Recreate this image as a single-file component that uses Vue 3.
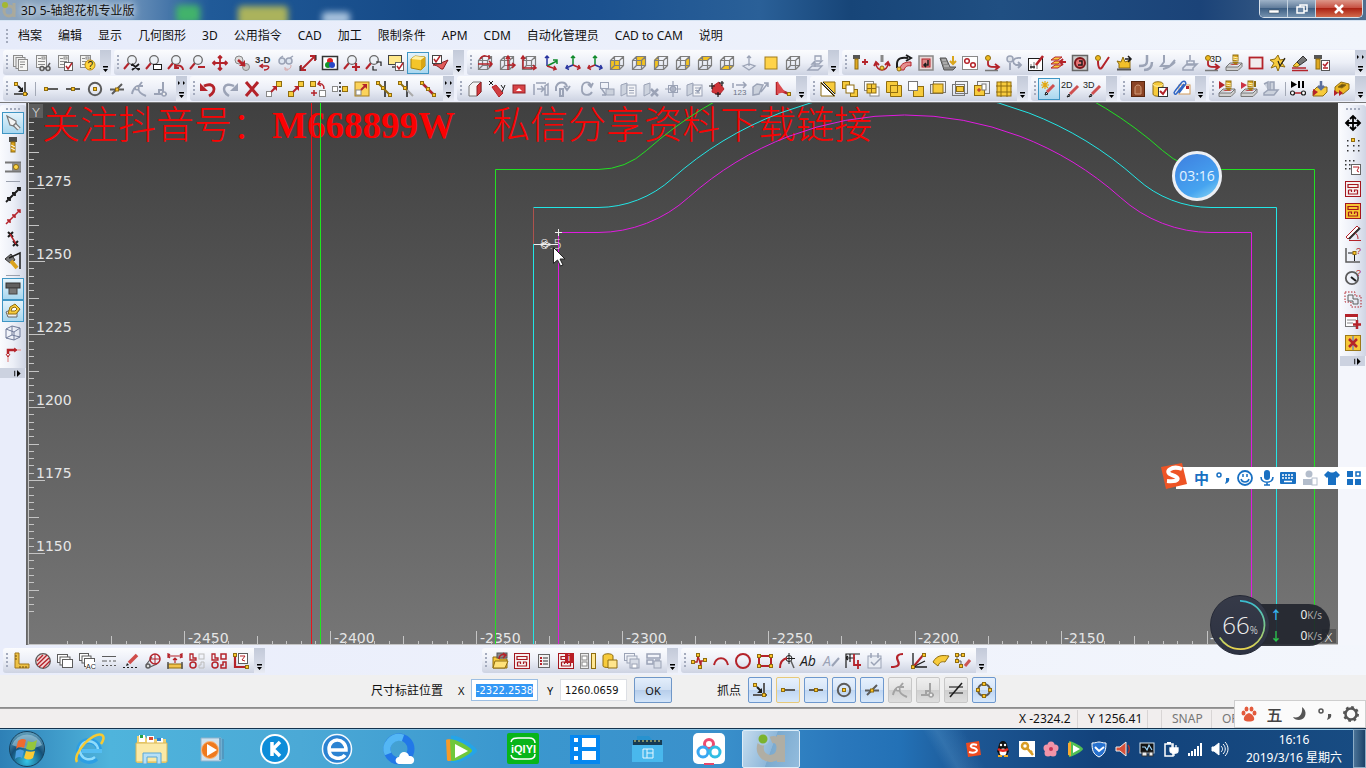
<script setup>
import { onMounted, ref } from 'vue'

const R = '#b4232a'
const Y = '#f7cb3c'
const K = '#1c1c1c'
const D = '#5c5c5c'
const S = '#9ba3b6'
const O = '#8f6d10'

const P = (d, s = K, w = 1.5, f = 'none') => `<path d="${d}" stroke="${s}" stroke-width="${w}" fill="${f}"/>`
const B = (x, y, w, h, f = 'none', s = 'none', sw = 1) => `<rect x="${x}" y="${y}" width="${w}" height="${h}" fill="${f}" stroke="${s}" stroke-width="${sw}"/>`
const C = (x, y, r, f = 'none', s = 'none', sw = 1.5) => `<circle cx="${x}" cy="${y}" r="${r}" fill="${f}" stroke="${s}" stroke-width="${sw}"/>`
const T = (x, y, t, size = 7, f = K) => `<text x="${x}" y="${y}" font-size="${size}" fill="${f}" font-family="Liberation Sans, sans-serif">${t}</text>`
const A = (x, t, f) => `<text x="${x}" y="13" font-size="14" font-style="italic" fill="${f}" font-family="Open Sans, sans-serif">${t}</text>`
const dot = (x, y) => B(x - 1.5, y - 1.5, 3, 3, '#ffc629', O)

const sheet = B(1.5, 0.5, 10, 12, '#f4f4f2', '#8b8b8b') + P('M3 3.5h3M3 6.500h7M3 9.500h7', '#8b8b8b', 1) + B(7, 2, 3, 2, 'none', '#8b8b8b')
const mag = P('M5 8L0 14', R, 2) + C(8, 5, 4.3, '#edf1f6', '#6a6a6a', 1.3)
const cube = (f) => f + P('M1.5 5.5h9v9h-9zM5.5 1.5h9v9h-9zM1.5 5.5l4-4M10.5 5.5l4-4M1.5 14.5l4-4M10.5 14.5l4-4', '#7d7d7d', 1.2)
const face = (d) => cube(P(d, 'none', 0, '#f3c31f'))
const wire = cube('')
const pen = (c = R) => P('M6 11L13 4', c, 3) + P('M4 14l1-3 2 2z', K, 1)
const tool = B(7, 0, 5, 6, '#dfa91d', O) + P('M7 2l5 1M7 4l5 1', '#fff2b0', 1) + P('M6 7h7l-3.500 3z', 'none', 0, '#a67c12')
const plate = P('M0 12l4-4h12l-4 4zM0 12v3.500h12l4-4V8', '#777', 1, '#cfcfcf') + P('M4 10l2-1h7l-2 1z', 'none', 0, '#c0474a')
const ball = C(4, 3, 2.5, '#eeb91d', O, 1)
const axes = (a, b, c) => P('M8 10V1M6 3l2-2 2 2', a, 1.5) + P('M8 10l7 3M12 14.500l3-1.500-1.500-3', b, 1.5) + P('M8 10l-7 3M4 14.500L1 13l1.500-3', c, 1.5)
const maze = (f, s) => B(0.5, 0.5, 15, 15, f, s, 1) + P('M3 3.500h10v3H3zM3.500 9v4h9V9M3.500 9h3v2M9.500 11V9h3', s, 1.200)
const page = B(6, 4, 9, 11, '#f3f4f7', S) + P('M8 7h5M8 9.500h5M8 12h5', S, 1)

const art = {
  copies: B(0.5, 0.5, 9, 11, '#eee', '#8b8b8b') + B(3, 2.500, 9, 11, '#eee', '#8b8b8b') + B(5.500, 4.500, 9, 11, '#f7f7f5', '#8b8b8b') + P('M7 7h5M7 9.500h5M7 12h3', '#8b8b8b', 1),
  sheetFind: sheet + C(7, 13.500, 2, '#ddd', D) + C(13, 13.500, 2, '#ddd', D) + P('M9 13h2M13 11l2-3', D),
  sheetCheck: sheet + B(7.500, 7.500, 8, 8, '#fff', '#666') + P('M9 11l2 3 4-6', R),
  sheetHelp: sheet + C(11, 10, 5, '#ffd63c', '#b98a12', 1) + T(8.500, 13.500, '?', 10),
  zoomAll: mag + P('M8 9l7 6M15 9l-7 6M8 9v2M15 15v-2', K, 1.8),
  zoomWin: mag + B(7.500, 9.500, 8, 5, '#fff', K),
  zoomBack: mag + P('M15 15c0-4-5-6-8-3M7 9v4h4', R, 1.8),
  zoomOut: mag + P('M8 12h7', R, 2),
  pan: P('M8 1v14M1 8h14M6 3l2-2 2 2M6 13l2 2 2-2M3 6L1 8l2 2M13 6l2 2-2 2', R, 1.8),
  spin: C(5, 5, 4, '#ddd', '#888', 1) + C(12, 12, 3.500, '#ccc', '#888', 1) + P('M4 5l7 6', R, 2.500) + P('M11 5v6H5z', 'none', 0, R),
  three: `<text x="-1" y="8" font-size="9.500" font-weight="700" font-family="Liberation Sans, sans-serif" fill="#333">3-D</text>` + P('M4 11h7c3 0 2 4-3 4M7 9l-3 2 3 2', R),
  glasses: C(4, 6, 3, '#dde5f0', S) + C(11, 6, 3, '#dde5f0', S) + P('M7 6h1M2 3l3-2M12 3l3-2', S) + P('M13 10c0 5-4 5-6 3M10 15H7v-3', '#d7a7a7', 1),
  measure: P('M1 15L15 1M10 1h5v5M1 10v5h5', R, 1.8) + P('M0 11v5M16 0v5', K, 1),
  colors: B(0.500, 1.500, 15, 13, '#fff', '#333', 1.500) + C(8, 6, 3, '#d22') + C(6, 10, 3, '#179429') + C(10, 10, 3, '#2947c7'),
  zoomIn: mag + P('M12 8v8M8 12h8', R, 2.200),
  zoomSel: mag + P('M10 7h5v4M7 11v4h4', K, 1.200),
  screenCheck: B(0.500, 0.500, 13, 9, '#ffe88a', '#444') + P('M4 12h5', '#444') + B(7.500, 7.500, 8, 8, '#fff', '#666') + P('M9 11l2 3 4-6', R),
  solid: P('M1 4l4-3 10 1v9l-4 4-10-2z', '#a88312', 1, '#f4c52a') + P('M1 4l10 1 4-3-10-1z', 'none', 0, '#fff1a6') + P('M11 5v10l4-4V2z', 'none', 0, '#d9a514'),
  surfCheck: P('M1 10c3-2 6 0 8-2l7-3-5 9c-3 1-4-4-10-4z', '#8b1c20', 1, '#e05a5a') + B(0.500, 0.500, 9, 8, '#fff', '#444') + P('M2 4l2 3 4-6', R),
  cubeA: wire + P('M3 4c3-5 8-3 10-1M12 0v4M1 9h14M12 6l3 3-3 3', R),
  cubeB: wire + P('M9 15V1M7 4l2-3 2 3M9 10h7M13 8l3 2-3 3', R),
  cubeC: wire + P('M2 1v12h13M0 4l2-3 2 3M12 10l3 3-3 2', R),
  ax1: P('M4 11V1M2 3l2-2 2 2', '#27339e', 1.5) + P('M4 11l10-5M10 5h4v4', '#118a2c', 1.5) + P('M4 11l9 3M11 11l2 3-3 1', R),
  ax2: axes('#118a2c', R, '#27339e'),
  ax3: axes('#118a2c', '#27339e', R),
  f1: face('M1 5h10v10H1z'), f2: face('M5 1h10v10H5z'), f3: face('M1 5l4-4v10l-4 4z'), f4: face('M10 5l5-4v10l-5 4z'), f5: face('M1 5l4-4h10l-4 4z'), f6: face('M1 15l4-4h10l-4 4z'),
  planeAx: P('M8 11V1M6 3l2-2 2 2M2 11l6-2 6 2-6 4z', S, 1.3),
  square: B(2, 2, 12, 12, '#ffd34a', '#a17c1b'),
  wire,
  layersUp: P('M1 15l4-4h10l-4 4zM8 12V7M5 9l3-3h7l-3 3zM8 5V1h6v4', S, 1.3),
  toolPlus: B(1, 0, 7, 4, '#555') + B(3, 4, 3, 10, '#e0aa22', O) + P('M10 7h6M13 4v6', R, 1.8),
  hook: P('M8 0v7', '#888', 3) + P('M2 8c0 9 12 9 12 0M0 11l2-4 3 3M11 10l3-3 2 4', R, 1.8) + C(8, 13, 2, Y, O, 1),
  bend: P('M1 13V9c0-6 5-7 11-6M10 0l5 3-5 3', K, 2) + P('M4 15c0-6 4-8 11-8v4c-4-1-6 1-7 4z', R, 1, '#e58f8f') + C(3, 14, 2, Y, O, 1),
  pocket: B(1, 1, 14, 14, '#e8d5d5', '#888', 1.500) + B(4, 4, 8, 8, '#d98585', R) + P('M10 5v5H6M8 8l-2 2 2 2', K),
  ramp: P('M0 3h6l4 9h6l-3 3H4z', '#555', 1, '#8a8a8a') + P('M2 5h4M3 8h4M4 11h5', '#ccc', 1) + P('M13 1v7M10 6l3 3 3-3', '#d9a51c', 2),
  holes: B(0.500, 1.500, 15, 13, '#fff', '#888') + C(5, 6, 2.300, 'none', R) + C(11, 10, 2.300, 'none', R),
  leadIn: ball + P('M4 6v3c0 3 3 3 10 3M11 9l4 3-4 3', R, 1.8) + P('M1 15.500h13', '#777'),
  leadTurn: C(4, 4, 3, '#dfe3ea', S) + P('M15 3c-8-1-10 4-5 7h5M12 7l3 3-3 3M4 8v7', S, 1.800),
  chart: B(0.500, 3.500, 14, 12, '#fff', K) + P('M3 14V9M6 14V7M9 14v-4', '#777', 1) + P('M8 10L15 1', R, 2.500) + P('M2 12h5', K),
  stack: P('M1 5l4-3h7l-4 3zM1 9l4-3h7l-4 3zM1 13l4-3h7l-4 3z', R, 1, Y) + P('M16 7h-5M13 4l-3 3 3 3', R, 1.800),
  face: B(0.500, 0.500, 15, 15, '#ccc', '#666', 1.500) + C(8, 8, 5, '#e57474', '#7e171a', 2) + P('M7 6h3v4H6', K),
  path: ball + P('M4 6c0 9 3 9 5 5l6-9', R, 2),
  gearBox: P('M3 13V9L1 6l4 1 2-5 2 5 5-2v8z', O, 1, '#f1c02a') + P('M1 14.500h14', '#555', 2) + P('M9 4h5M12 1l3 3-3 3', K),
  g1: P('M9 0v6c0 4-2 5-8 5M6 15c5 0 8-2 8-8', S, 2.500), g2: P('M4 0v7l-3 4h9l5-6M3 14c5-1 8-3 12-7', S, 2), g3: P('M8 0v6H5v4h7V6H9M1 13l4-4h10l-4 4v2H1z', S, 1.6),
  lead3d: ball + P('M4 6v3c0 3 3 3 10 3M11 9l4 3-4 3', R, 1.8) + T(6, 7, '3D', 9) + P('M1 15.500h13', '#777'),
  mill: plate + tool, redRect: B(1.500, 2.500, 13, 11, '#f1eded', R, 1.800),
  star: P('M8 0l2 5 5-1-3 4 3 4-5-1-2 5-2-5-5 2 3-5-4-3 5-1z', O, 1, Y) + P('M8 6l2 5 5-8', K, 1.200),
  brush: P('M0 13h14M0 15.500h16', R) + P('M1 11l4-4 3 3-3 2z', O, 1, Y) + P('M5 7l6-6 4 4-7 5z', '#333', 1, '#777'),
  toolList: B(0, 0, 8, 4, '#555') + B(2, 4, 4, 10, '#e0aa22', O) + B(7.500, 5.500, 8, 10, '#fff', '#555') + P('M9 9l2 2 3-4M9 13h5', R),
  snap: P('M12 1v12M1 13h14', D, 2) + P('M5 5l4 4', K, 2) + P('M10 6v5H5z', 'none', 0, K) + dot(3, 3) + dot(12, 13),
  snapEnd: P('M2 8h13', D, 2) + dot(3, 8), snapMid: P('M1 8h14', D, 2) + dot(8, 8), snapCtr: C(8, 8, 6.200, 'none', D, 2) + dot(8, 8),
  snapInt: P('M1 8.500h14M3 13L13 3', D, 2) + dot(8, 8.500),
  snapTan: P('M1 13c1-5 3-7 6-8h5M7 6c0 5 3 7 8 9M7 6L11 1', S, 2) + C(6, 7, 1.800, '#eee', S),
  snapPerp: P('M10 1v12M1 13h13M6 12V9h3', S, 2) + C(11, 13, 2, '#eee', S),
  snapPar: P('M1 5h14M1 11h14', '#777', 2) + P('M2 15L14 1', K), snapQuad: C(8, 8, 6, 'none', D, 2) + dot(8, 2) + dot(8, 14) + dot(2, 8) + dot(14, 8),
  undo: P('M4 5c10-5 14 5 5 10', R, 3) + P('M0 2v8h8z', 'none', 0, R), redo: P('M12 5C2 0-2 10 7 15', S, 2.500) + P('M16 2v8H8z', 'none', 0, S),
  del: P('M2 1l12 14M14 1L2 15', R, 3),
  move1: B(0.500, 10.500, 5, 5, '#fff', '#888') + B(10.500, 0.500, 5, 5, Y, O) + P('M5 11l4-4', R, 2) + P('M6 5h5v5z', 'none', 0, R), move2: B(0.500, 10.500, 5, 5, Y, O) + B(10.500, 0.500, 5, 5, Y, O) + P('M5 11l4-4', R, 2) + P('M6 5h5v5z', 'none', 0, R),
  rotate: B(0.500, 0.500, 5, 5, Y, O) + B(9.500, 9.500, 6, 6, '#fff', '#888') + P('M14 8c0-5-3-6-6-5M10 0L8 3l3 2M1 12h6M4 9v6', R),
  mirror: B(0.500, 5.500, 5, 5, '#fff', '#888') + B(10.500, 5.500, 5, 5, Y, O) + P('M8 1v2M8 5v2M8 9v2M8 13v2', K),
  scale: B(1, 1, 14, 14, '#fbd35b', '#a97f19') + B(2, 9, 5, 5, '#fff', '#888') + P('M7 9l4-4', R, 2) + P('M8 3h5v5z', 'none', 0, R),
  trim1: P('M9 0v16', K) + P('M1 1l14 14', O, 2) + dot(2, 2) + dot(7, 7) + dot(14, 14), trim2: P('M9 0v16', K) + P('M9 9l6 6', '#aaa', 2) + P('M1 1l8 8', O, 2) + dot(2, 2) + dot(7, 7), trim3: P('M1 1l14 14', R, 2.500) + dot(2, 2) + dot(8, 8) + dot(14, 14),
  box: P('M2 5l4-4h8v10l-4 4H2z', '#777', 1, '#f3f3f3') + P('M10 5l4-4v10l-4 4z', '#8d2024', 1, '#d5393d'),
  boxRot: P('M3 6l4-2 7 8-4 4z', R, 1, '#d13d40') + P('M0 0l4 4M4 0L0 4M12 4l2 3M16 4l-3 7', K, 1), tag: B(2, 4, 12, 8, '#d74347', '#962025') + P('M5 10h6L8 7z', 'none', 0, '#fff'),
  s1: P('M1 3v11M4 8h6M8 5l3 3-3 3M12 5v9h3V3zM3 2h10', S, 1.500), s2: P('M1 10V6c2-6 10-6 11 0M9 5l3 4 3-4M5 8v7h3V8z', S, 2), s3: P('M15 11c-2 4-9 4-10-1V6c1-6 8-6 9-1M11 3l3 3 2-4', S, 1.800), s4: B(1.500, 1.500, 8, 6, 'none', S) + B(7, 8, 8, 6, '#cbd1dc', S) + P('M2 7l5 7M3 14h4', S), s5: P('M0 4l6-2v10l-6 3z', S, 1, '#cdd3de') + page,
  s6: P('M1 4l6-2v10l-6 3z', S, 1, '#cdd3de') + P('M8 8l7 7M15 8l-7 7', S, 2.500), s7: B(3.500, 4.500, 9, 7, 'none', S) + P('M8 0v16M0 8h16', S, 1.200) + C(8, 8, 2.500, 'none', S), s8: P('M0 4l6-2v10l-6 3z', S, 1, '#cdd3de') + page + P('M9 9l2 2 3-5', S, 1.500),
  pts: P('M4 5l6-4 5 7-5 6-7-3z', R, 1, '#cf3438') + P('M3 2v6M0 5h6M13 0v5M10 2h5M9 11v5M6 13h6', K, 1.200), s9: T(2, 14, '123', 8, '#6d7384') + P('M2 7V2M5 4h9M12 1l3 3-3 3', S), s10: P('M0 6l4-3 6 1-4 9-6 1zM8 11l7-9M11 2h4v4', S, 1.500, '#cbd1dc'), corner: P('M2 1v13M2 8l12 5', R, 2.500) + dot(14, 13) + P('M2 13V0l8 11z', 'none', 0, '#db4b4e'),
  tri: P('M1 1v14h14z', O, 1, '#fff') + P('M3 1h12v12z', O, 1, Y) + P('M1 2l13 13M3 1l12 12', K, 1),
  sq1: B(0.500, 0.500, 7, 7, Y, O) + B(8.500, 8.500, 7, 7, Y, O) + B(4, 4, 8, 8, '#fff', O), sq2: B(0.500, 0.500, 9, 9, '#fff', '#888') + B(6, 6, 9, 9, '#fff', '#888') + B(3, 3, 9, 9, Y, O) + P('M7.500 3v9M3 7.500h9', O, 1),
  sq3: P('M0.500 0.500h11v4h4v11h-11v-4h-4z', O, 1, Y) + B(4.500, 4.500, 7, 7, 'none', O), sq4: B(5.500, 5.500, 10, 10, Y, O) + B(0.500, 0.500, 9, 9, '#fff', '#777'), sq5: B(0.500, 3.500, 12, 9, '#e3e3e3', '#777') + B(3.500, 0.500, 12, 11, 'none', '#777') + B(3, 3, 10, 9, Y, O), sq6: B(0.500, 3.500, 12, 11, 'none', '#777') + B(3.500, 0.500, 12, 12, 'none', '#777') + B(4.500, 5.500, 7, 5, Y, O), sq7: B(3.500, 0.500, 12, 12, 'none', '#777') + B(0.500, 4.500, 10, 10, Y, O) + P('M3 9h4M5 7v4', R, 1) + B(8, 3, 4, 6, '#fff', '#777'), grid: B(1, 1, 14, 14, Y, O) + P('M5 0v16M11 0v16M0 5h16M0 11h16', O, 1),
  wand: pen('#cf5050') + P('M4 0v8M0 4h8M1 1l6 6M7 1L1 7', '#e2a812', 1.200), d2: T(-2, 7, '2D', 9) + P('M7 13L15 5', '#cf5050', 3) + P('M4 16l3-1-1-2z', K, 1), d3: T(-2, 7, '3D', 9) + P('M7 13L15 5', '#cf5050', 3) + P('M4 16l3-1-1-2z', K, 1),
  door: B(1.500, 0.500, 13, 15, '#8a4324', '#57260f') + P('M5 13V7c0-4 6-4 6 0v6z', '#d09a78', 1, '#a25a35'),
  dbCheck: P('M1 3c0-3 10-3 10 0v10c0 3-10 3-10 0z', O, 1, Y) + P('M1 3c0 3 10 3 10 0', '#fff3b0', 1) + B(6.500, 6.500, 9, 9, '#fff', '#333') + P('M8 10l3 3 4-6', R, 2), clip: B(5, 4, 11, 9, '#fff', '#d09a5a') + B(12, 5, 3, 3, R) + P('M10 3L3 12c-2 3-4 0-2-2L8 1c3-2 5 1 3 3l-6 8', '#3066c4', 1.500),
  run1: plate + tool + P('M0 0l6 4-6 4z', 'none', 0, R), run2: plate + tool + P('M0 1l6 3-6 4z', 'none', 0, '#c34') + P('M14 0v6', O, 2), run3: P('M1 3l4-2v8M7 1v8h4V1zM1 12l4-3h10l-4 5H1z', S, 1.500, '#cbd1dc'), playPause: P('M1 0l6 3.500L1 7z', 'none', 0, '#000') + P('M9 0v7M13 0v7', '#000', 2) + C(2.500, 12, 2, '#fff', K, 1.200) + C(13.500, 12, 2, '#fff', K, 1.200) + P('M5 12h6', R), box1: P('M1 10l4-4h10v5l-4 4H1z', O, 1, Y) + P('M9 0v7M6 5l3 3 3-3', '#5c6f9c', 2.500) + P('M1 8l5 3-5 4z', 'none', 0, R), box2: P('M1 6l6-5 8 2v5l-6 5-8-2z', O, 1, '#ecb724') + P('M4 6l4-3 4 1-4 3z', O, 1, '#6f5512') + P('M0 9l4 3-4 3zM5 9l4 3-4 3z', 'none', 0, R),
  arrow: P('M2 1l9 5v4l-2 1-4-1z', '#777', 1.200, '#f4f4f4') + P('M9 9l5 5', '#777', 4.500) + P('M10 10l4 4', '#eee', 2.200), cutter: B(4, 0, 8, 5, '#4d4d4d') + B(6, 5, 4, 10, '#dea41b', O) + P('M6 8l4 2M6 11l4 2', '#fff', 1), slot: P('M0 3.500h16M0 12.500h16', '#777', 2) + B(7, 4, 9, 8, '#8a8a8a') + C(11, 8, 2.500, '#ffd84a', O, 1), chainK: P('M1 15L15 1M5 14v-3H2M10 9V6H7M15 4V1h-3', K, 1.800), chainR: P('M1 15L15 1M5 14v-3H2M10 9V6H7M15 4V1h-3', R, 1.500), chainX: P('M3 1l5 5M8 1L3 6M8 10l5 5M13 10l-5 5', K, 2) + P('M5 3l6 10', R), cutCheck: P('M0 6l6-5 4 6-5 3z', '#333', 1, '#777') + P('M6 8l6 7', '#dba31d', 4) + P('M4 5L15 0v16', K),
  holder: B(1, 2, 14, 5, '#606060', '#333') + B(4, 7, 8, 6, '#777', '#444'), goldBlock: P('M1 9l6-3h8l-3 4v4H3z', '#666', 1, '#eee') + P('M3 11l2-7 5-3 5 5-4 5z', O, 1, Y) + P('M6 8l1-3 3-1 2 2-2 2z', O, 1, '#fff'), wireBox: P('M1 4l6-3 8 2v9l-6 3-8-2zM1 4l8 3 6-4M9 7v8M7 1v9l-6 3M7 10l8 2', '#707b99', 1), redCorner: P('M3 7V3h8', R, 2.500) + P('M3 8v7M12 3h4', '#e6a3a3', 1.500) + P('M1 7l2 3 2-3M9 1l3 2-3 2', R, 1),
  moveK: P('M8 1v14M1 8h14M5 4l3-3 3 3M5 12l3 3 3-3M4 5L1 8l3 3M12 5l3 3-3 3', '#000', 1.800), dots: [3, 8, 13].map(y => [2, 8, 13].map(x => B(x, y, 1.500, 1.500, '#333')).join('')).join('') + dot(8, 3), dotsList: [1, 5, 9].map(y => [0, 4, 8].map(x => B(x, y, 1.500, 1.500, '#333')).join('')).join('') + B(6.500, 5.500, 9, 10, '#fff', '#666') + P('M8 8h6l-2 4 2 1', R, 1),
  mazeR: maze('#f6eeee', '#a4171f'), mazeY: maze('#f7c433', '#a4171f'), ruler: P('M1 12L12 1l2 2L3 14z', R, 1, '#fff') + P('M4 14L15 3', '#333', 2) + P('M4 15.500h12M13 14c0-3-1-5-3-6', R, 1), axisQ: P('M1 1v14h14', D) + P('M3 6h5M9.500 8v6', K, 1) + dot(9.500, 6) + T(11, 7, '?', 9, R), circQ: C(7, 9, 6.200, 'none', D, 1.800) + P('M6 8l5 4', K, 2) + T(11, 7, '?', 9, R), dotShape: P('M0 1h10v4h6v11H6v-5H0z', R, 1).replace('/>', ' stroke-dasharray="1.500 1.500"/>') + P('M3 4h5v4h5v5H8v-3H3z', D, 1), listPlus: B(0.500, 1.500, 12, 12, '#fff', '#777') + B(0, 1, 13, 3, R) + P('M2 7h9M2 10h6', '#888', 1) + P('M12 7v9M8 11.500h8', R, 2.500), boxX: B(0.500, 0.500, 15, 15, '#f7c738', '#9c7a19') + P('M8 1v14', '#999', 2) + P('M4 4l8 8M12 4l-8 8', R, 2.500),
  rulerL: P('M2 0h4v11h10v4H2z', '#a17719', 1, '#eec245') + P('M2 3h2M2 6h2M7 15v-2M10 15v-2M13 15v-2', '#6e4c10', 1), hatch: C(8, 8, 7.300, '#f4d5d5', D, 1.300) + P('M2 8l6-6M2 12L12 2M4 14L14 5M8 15l7-7', R, 1.400), rects: B(0.500, 1.500, 10, 8, '#fff', D) + B(3, 4, 10, 8, '#fff', D) + B(5.500, 6.500, 10, 8, '#fff', D), rectsAc: B(0.500, 0.500, 9, 7, '#fff', D) + B(3, 3, 9, 7, '#fff', D) + B(5.500, 5.500, 10, 8, '#fff', D) + B(7, 9, 9, 7, '#fff') + T(7, 16, 'AC', 7), lines: P('M1 3.500h14', D, 1) + P('M1 8h5M8 8h2M12 8h3M1 12.500h2M5 12.500h2M9 12.500h2M13 12.500h2', D, 1), penLine: P('M0 14.500h2M4 14.500h2M8 14.500h2M12 14.500h2', K, 1) + P('M6 10l8-8', '#cf4c49', 3.500) + P('M3 13l3-1-2-2z', 'none', 0, K), bulb: P('M1 12l6-8M5 14l7-3', D, 1.200) + C(10, 6, 5, 'none', R) + P('M10 1v10M5 6h10', R, 1) + C(3, 13, 2, '#ddd', D),
  dim: P('M1 0v5M15 0v5M1 3h14M3 1L1 3l2 2M13 1l2 2-2 2M8 10V5M6 7l2-2 2 2', R, 1.200) + B(1, 11, 14, 4, '#f1c34b', O) + P('M1 9v7M15 9v7', '#555'), shapesA: P('M1 1v6h6V5H4V1z', R, 1.300) + C(4, 12, 3, 'none', R) + B(10, 1, 5, 5, 'none', '#bcbcbc') + P('M10 15h5V9h-3v3h-2z', '#bcbcbc', 1), shapesB: P('M1 1v6h6V5H4V1z', R, 1.300) + C(4, 12, 3, 'none', R) + B(10, 1, 5, 5, 'none', R, 1.500) + P('M10 15h5V9h-3v3h-2z', R), frame: P('M2 2v12h12', R, 2.200) + dot(2, 2) + dot(14, 14) + B(5.500, 0.500, 9, 10, '#fff', D) + P('M7 3h5l-3 4 3 1', R, 1),
  folder: P('M1 4h5l1 2h8v9H1z', O, 1, Y) + B(5, 0, 10, 5, '#8a8a8a', '#555') + P('M3 8h13l-3 7H1z', O, 1, '#ffe27a') + P('M7 6c0-4 3-5 6-4M11 0l3 2-3 3', R), listR: B(2.500, 1.500, 11, 13, '#f1f1f1', '#666') + P('M4 5h2M4 8h2M4 11h2', R, 2) + P('M7 5h5M7 8h5M7 11h5', '#333', 1), mazeI: maze('#f6eeee', '#a4171f') + B(7, 0, 9, 10, '#b81e25') + T(10, 8, 'i', 9, '#fff'), cols: B(0.500, 0.500, 8, 15, '#eee', '#888') + B(2, 3, 5, 4, '#fff', '#888') + B(2, 9, 5, 4, '#fff', '#888') + B(11.500, 0.500, 4, 15, '#ffe794', O), dbFile: P('M1 3c0-3 10-3 10 0v10c0 2-10 2-10 0z', O, 1, Y) + P('M6 7h9v8H6z', O, 1, '#ffe58c'), saveG: B(0.500, 0.500, 10, 7, 'none', S) + B(3, 3, 10, 7, '#eceff5', S) + B(6, 6, 9, 9, '#d8dde7', S) + B(8, 11, 5, 4, '#fff', S), mazeG: P('M1 1h13v4H1zM1 7h6v4H1zM9 7h5', S) + B(8, 8, 7, 7, '#d8dde7', S),
  poly: P('M1 9h5l1-6 3 10V8h4', R, 1.500) + dot(2, 9) + dot(7, 2) + dot(9, 14) + dot(14, 7), arc: P('M1 12C3 3 13 3 15 12', R, 2), circle: C(8, 8, 7, 'none', R, 2), rectP: B(2, 3, 12, 10, 'none', R, 2) + dot(2, 3) + dot(14, 3) + dot(2, 13) + dot(14, 13), arcT: C(10, 5.500, 3, 'none', K, 1) + P('M10 0v11M5 5.500h11', K, 1) + P('M1 15c0-7 3-9 7-10', R, 2) + P('M12 8l3 7', D), ab: A(-1, 'Ab', K), abG: A(0, 'A', S) + P('M9 13l7-8', S, 2), measureR: P('M1 15V1h14M5 1v8M1 5h9M3 3L1 5l2 2', K, 1.200) + P('M9 1v11h7M13 7v9', R, 1.800), calG: B(1, 3, 13, 12, '#e9edf4', S) + P('M4 0v5M11 0v5M4 9l3 3 7-7', S), ess: P('M14 1C8 1 7 4 9 8s0 6-7 6', R, 2.200), angle: P('M2 0v14h14M2 14l12-6', K, 1.300) + P('M3 13L13 1', R, 2) + dot(2, 14) + dot(13, 2), surf: P('M0 9c4-7 9-7 16-6l-4 6c-4-1-6 1-7 4z', O, 1, Y), polyPen: P('M2 2h6M2 2v6h4M6 8v5', D, 1) + dot(2, 2) + dot(8, 2) + dot(2, 8) + dot(6, 13) + P('M10 13l5-6', '#cc5552', 3)
}

const L = (s) => s.split(' ').map((n) => ({ name: n.replace('*', ''), on: n.endsWith('*'), sep: n === '|' }))
const row1 = [
  { icons: L('copies sheetFind sheetCheck sheetHelp') },
  { icons: L('zoomAll zoomWin zoomBack zoomOut pan spin three glasses measure colors zoomIn zoomSel screenCheck solid* surfCheck') },
  { icons: L('cubeA cubeB cubeC ax1 ax2 ax3 f1 f2 f3 f4 f5 f6 planeAx square wire layersUp') },
  { icons: L('toolPlus hook bend pocket ramp holes leadIn leadTurn chart stack face path gearBox g1 g2 g3 lead3d mill redRect star brush toolList'), more: true, grow: true }
]
const row2 = [
  { icons: L('snap | snapEnd snapMid snapCtr snapInt snapTan snapPerp'), more: true },
  { icons: L('undo redo del move1 move2 rotate mirror scale trim1 trim2 trim3'), more: true },
  { icons: L('box boxRot tag s1 s2 s3 s4 s5 s6 s7 s8 pts s9 s10 corner') },
  { icons: L('tri sq1 sq2 sq3 sq4 sq5 sq6 sq7 grid') },
  { icons: L('wand* d2 d3') },
  { icons: L('door dbCheck clip') },
  { icons: L('run1 run2 run3 | playPause box1 box2'), grow: true }
]
const bottomLeft = [{ icons: L('rulerL hatch rects rectsAc lines penLine bulb dim shapesA shapesB frame') }]
const bottomMid = [
  { icons: L('folder mazeR listR mazeI cols dbFile saveG mazeG') },
  { icons: L('poly arc circle rectP arcT ab abG measureR calG ess angle surf polyPen') }
]
const bars = [row1, row2]
const leftTools = L('arrow* cutter slot | chainK chainR chainX cutCheck | holder* goldBlock* wireBox redCorner')
const rightTools = L('moveK dots dotsList mazeR mazeY ruler axisQ circQ dotShape listPlus boxX')
const menus = ['档案', '编辑', '显示', '几何图形', '3D', '公用指令', 'CAD', '加工', '限制条件', 'APM', 'CDM', '自动化管理员', 'CAD to CAM', '说明']
const snaps = [
  { n: 'snap', c: 'on' }, { n: 'snapEnd', c: 'hot' }, { n: 'snapMid', c: 'on' }, { n: 'snapCtr', c: 'on' }, { n: 'snapInt', c: 'on' },
  { n: 'snapTan', c: 'off' }, { n: 'snapPerp', c: 'off' }, { n: 'snapPar', c: 'off' }, { n: 'snapQuad', c: 'on' }
]

const range = (a, b) => Array.from({ length: b - a + 1 }, (_, i) => a + i)
const yTicks = range(-11, 58).map((i) => ({ y: 188.5 + i * 7.3, w: i % 10 === 0 ? 16 : i % 5 === 0 ? 10 : 5 })).filter((t) => t.y > 118 && t.y < 615)
const xTicks = range(-8, 72).map((i) => ({ x: 184.5 + i * 14.61, h: i % 10 === 0 ? 13 : i % 5 === 0 ? 8 : 3 })).filter((t) => t.x > 60 && t.x < 1320)
const yLabels = [1275, 1250, 1225, 1200, 1175, 1150].map((v, i) => ({ v, y: 186 + i * 73 }))
const xLabels = [-2450, -2400, -2350, -2300, -2250, -2200, -2150, -2100].map((v, i) => ({ v, x: 188 + i * 146 }))

const apps = {
  ie: '<path d="M26 18A10 10 0 1 0 23 25" fill="none" stroke="#2d9fe4" stroke-width="6"/><path d="M25 17A9 9 0 1 0 22 24" fill="none" stroke="#8fdcfb" stroke-width="2.500"/><path d="M9 18h20" stroke="#54bdf2" stroke-width="4"/><path d="M4 29C-1 21 20-2 29 2c3 2 1 6-1 9" fill="none" stroke="#f6ca34" stroke-width="2.5"/>',
  folder: '<path d="M2 3h8l2 3h19v24H2z" fill="#efd173"/><path d="M4 2h6v7H4zM12 3h7v7h-7zM22 5h6v6h-6z" fill="#fff"/><path d="M5 2h3v3H5z" fill="#27a345"/><path d="M14 4h4v3h-4z" fill="#d84b30"/><path d="M22 5h4v3h-4z" fill="#3180d0"/><path d="M1 10h31v19H1z" fill="#fbe9a6" stroke="#d8b655"/><path d="M8 31V20h18v11h-4v-7H12v7z" fill="#b7e0f6" stroke="#5ba7d6"/>',
  media: '<path d="M4 5h20v23H4z" fill="#cfe2ef" stroke="#8fb2cb"/><path d="M23 5v22M26 6v20" stroke="#5391b8" stroke-width="1.500"/><circle cx="13" cy="17" r="8.500" fill="#ef7a1e" stroke="#f8b67c"/><path d="M10 11l10 6-10 6z" fill="#fff"/>',
  k: '<circle cx="16" cy="16" r="15" fill="#fff"/><circle cx="16" cy="16" r="13" fill="#0d8dd9"/><path d="M13 9v14M21 9l-7 7 7 7" stroke="#fff" stroke-width="3.500" fill="none"/>',
  e2: '<circle cx="16" cy="16" r="14.500" fill="#2b83d2" stroke="#f4faff" stroke-width="1.500"/><path d="M24 22c-3 5-16 5-16-6 0-12 17-12 17 1H9" fill="none" stroke="#fff" stroke-width="3.500"/>',
  q: '<circle cx="16" cy="16" r="12" fill="none" stroke="#2278e8" stroke-width="7"/><path d="M5 21A12 12 0 0 1 20 5" fill="none" stroke="#54b7f5" stroke-width="7"/><path d="M16 31c-5-1-4-7 0-7 1-7 9-6 10-1 6-1 7 7 2 8z" fill="#fff"/>',
  tv: '<path d="M6 3c4-3 27 11 26 15S10 33 6 29z" fill="#25a4e8"/><path d="M1 7c3-4 24 8 23 11S4 31 2 27z" fill="#f89a28"/><path d="M5 7c3-3 23 8 22 11S8 31 6 27z" fill="#6fc83b"/><path d="M10 11l13 7-13 7z" fill="#fff"/>',
  qiyi: '<rect width="32" height="31" rx="2" fill="#08b51a"/><path d="M4 9C5 5 8 5 11 5h11c4 0 6 1 6 5M4 22c1 4 4 4 7 4h11c4 0 6-1 6-5" fill="none" stroke="#fff" stroke-width="1.500"/><text x="4" y="20" font-family="Liberation Sans,sans-serif" font-weight="700" font-size="11" fill="#fff">iQIYI</text>',
  grid: '<rect x="1" y="2" width="30" height="29" fill="#0587f0"/><path d="M5 5h4v4H5zM5 14h4v4H5zM5 23h4v4H5zM13 5h14v9H13zM13 18h14v9H13z" fill="#fff"/>',
  film: '<path d="M6 3h12l3 4H6z" fill="#2792cf"/><path d="M2 7h29v8H2z" fill="#163b53"/><path d="M3 8h28" stroke="#e7e37d" stroke-dasharray="2 2"/><path d="M1 12h31v17H1z" fill="#49b8ed"/><path d="M12 16h10v9H12zM16 16v9M16 20h6" fill="none" stroke="#e8f8ff"/>',
  cloud: '<rect width="32" height="31" rx="5" fill="#fff"/><circle cx="16" cy="11" r="4.500" fill="none" stroke="#ed4c70" stroke-width="3"/><circle cx="10" cy="19" r="5" fill="none" stroke="#39a7f2" stroke-width="3"/><circle cx="22" cy="19" r="5" fill="none" stroke="#31bde3" stroke-width="3"/><path d="M11 31h10" stroke="#e5486a" stroke-width="2"/>',
  alpha: '<path d="M6 11c-3 9 4 16 12 14 5-1 7-6 7-11s-4-9-9-7" fill="none" stroke="#b0aea4" stroke-width="7"/><path d="M22 2h8v27h-8z" fill="#b0aea4"/><circle cx="8" cy="6" r="5.500" fill="#7bb32e" stroke="#a9c8de" stroke-width="2"/>'
}
const tray = [
  P('M1 2l13-2 2 14-13 2z', 'none', 0, '#ee4b20') + P('M12 4c-6-2-9 2-3 3 6 2 2 6-5 4', '#fff', 2),
  P('M8 0c-5 0-4 7-6 10l2 4h8l2-4c-2-3-1-10-6-10z', 'none', 0, '#111') + C(8, 11, 3.500, '#fff') + P('M3 8c3 2 7 2 10 0', '#e52c22', 2.500) + C(6, 4, 1.200, '#fff') + C(10, 4, 1.200, '#fff') + P('M3 15h4M9 15h4', '#f4a91e', 2),
  B(0, 0, 16, 16, '#fff') + C(6, 5, 3, 'none', '#d79c25', 2.500) + P('M8 7l6 7M11 12l2-2', '#d79c25', 2.500),
  [[8, 4], [12, 7], [10, 12], [5, 12], [4, 7]].map(a => C(a[0], a[1], 3.500, '#f294a8')).join('') + C(8, 8, 2, '#c83555'),
  P('M2 0c3 0 14 6 14 8S5 16 2 16z', 'none', 0, '#52bf54') + P('M1 2v12l3 1V1z', 'none', 0, '#f7aa30') + P('M6 4l7 4-7 4z', 'none', 0, '#fff'),
  P('M1 2c4 0 5-1 7-1s3 1 7 1c0 7-1 11-7 14C2 13 1 9 1 2z', '#fff', 1, '#2671cf') + P('M4 6l4 4 5-4', '#fff', 2),
  P('M1 6h4l6-5v14l-6-5H1z', '#eee', 1, '#d65039') + P('M13 4c2 3 2 5 0 8', '#a33', 1.500),
  B(1, 2, 14, 10, '#111', '#d8e5f0') + P('M3 6h3l2 3 2-5 3 5', '#9ed8ff', 1.200) + B(3, 11, 5, 4, '#eee', '#333') + B(10, 11, 4, 4, '#eee', '#333'),
  B(2, 3, 8, 12, 'none', '#fff', 1.500) + B(4, 1, 4, 2, '#fff') + P('M7 7h8v3c0 3-8 3-8 0zM9 4v3M13 4v3M11 12v3', '#fff', 1.300, '#fff'),
  P('M2 15v-3M5 15v-5M8 15V8M11 15V5M14 15V2', '#fff', 2),
  P('M1 6h2l5-4v12l-5-4H1z', '#fff', 1, '#fff') + P('M10 5c2 2 2 4 0 6M12 3c3 3 3 7 0 10M14 1c4 4 4 10 0 14', '#fff', 1)
]
const appNames = Object.keys(apps)

const xField = ref(null)
onMounted(() => {
  xField.value.focus()
  xField.value.select()
})
</script>

<template>
  <div class="app">
    <header class="title">
      <span class="blob green"></span><span class="blob gold"></span><span class="blob pale"></span>
      <svg class="logo" viewBox="0 0 16 16"><circle cx="8" cy="9" r="5" fill="none" stroke="#aaa99b" stroke-width="3" /><path d="M13 1v14" stroke="#aaa99b" stroke-width="3" /><circle cx="4" cy="3" r="3" fill="#a4b832" /></svg>
      <h1>3D 5-轴鉋花机专业版</h1>
      <div class="winbtns">
        <button aria-label="最小化"><svg viewBox="0 0 12 10"><path d="M1 6h10v3H1z" fill="#fff" stroke="#345" stroke-width=".5" /></svg></button>
        <button aria-label="还原"><svg viewBox="0 0 12 10"><path d="M4 1h7v6H4z" fill="none" stroke="#fff" stroke-width="1.500" /><path d="M1 3h7v6H1z" fill="#6a86a5" stroke="#fff" stroke-width="1.500" /></svg></button>
        <button class="close" aria-label="关闭"><svg viewBox="0 0 12 10"><path d="M2 1l8 8M10 1L2 9" stroke="#fff" stroke-width="2.500" /></svg></button>
      </div>
    </header>

    <nav class="menu"><i class="grip"></i><button v-for="m in menus" :key="m">{{ m }}</button></nav>

    <div v-for="(bar, bi) in bars" :key="bi" class="bar">
      <div v-for="(g, gi) in bar" :key="gi" class="group" :class="{ grow: g.grow }">
        <div class="strip" :class="{ wide: g.more }">
          <i class="grip"></i>
          <template v-for="(ic, k) in g.icons" :key="k">
            <span v-if="ic.sep" class="vsep"></span>
            <button v-else class="tb" :class="{ on: ic.on }" :aria-label="ic.name"><svg viewBox="0 0 16 16" v-html="art[ic.name]"></svg></button>
          </template>
        </div>
        <button class="over" aria-label="更多"><svg viewBox="0 0 11 25"><path v-if="g.more" d="M2 5l2 2-2 2zM7 5l2 2-2 2z" /><path d="M3 16h5v1.500H3zM3 19h5l-2.500 3z" /></svg></button>
      </div>
    </div>

    <main class="main">
      <aside class="side">
        <div class="vstrip">
          <i class="hgrip"></i>
          <template v-for="(ic, k) in leftTools" :key="k">
            <span v-if="ic.sep" class="hsep"></span>
            <button v-else class="tb" :class="{ on: ic.on }" :aria-label="ic.name"><svg viewBox="0 0 16 16" v-html="art[ic.name]"></svg></button>
          </template>
        </div>
        <button class="vover" aria-label="更多"><svg viewBox="0 0 10 10"><path d="M2 2h1v6H2zM5 1l4 4-4 4z" /></svg></button>
      </aside>

      <svg class="canvas">
        <defs><linearGradient id="bg" x1="0" y1="0" x2="0" y2="1"><stop offset="0" stop-color="#404040" /><stop offset="1" stop-color="#767676" /></linearGradient></defs>
        <rect width="100%" height="100%" fill="url(#bg)" />
        <svg width="100%" height="100%">
          <g transform="translate(-27 -103)">
            <g class="scale">
              <text v-for="l in yLabels" :key="l.v" x="36" :y="l.y">{{ l.v }}</text>
              <text v-for="l in xLabels" :key="l.v" :x="l.x" y="643">{{ l.v }}</text>
            </g>
            <g stroke="#c4c4c4" fill="none">
              <path d="M28.500 103V644.500H1338" />
              <path v-for="t in yTicks" :key="t.y" :d="`M29 ${Math.floor(t.y)}.500h${t.w}`" />
              <path v-for="t in xTicks" :key="t.x" :d="`M${Math.floor(t.x)}.500 644v-${t.h}`" />
            </g>
          </g>
        </svg>
        <g transform="translate(-27 -103)" class="notice">
          <text x="42" y="138">关注抖音号：</text>
          <text x="272" y="138" class="code">M668899W</text>
          <text x="492" y="138">私信分享资料下载链接</text>
        </g>
        <svg width="100%" height="100%">
          <g transform="translate(-27 -103)">
            <g fill="none">
              <path d="M311.500 103v541" stroke="#e8141c" />
              <path d="M320.500 103v541" stroke="#1ee61e" />
              <path d="M495.500 644V169.500H598A73 73 0 0 0 646.600 150.400A387 387 0 0 1 1162.400 150.400A73 73 0 0 0 1211 169.500H1314.500V644" stroke="#22e022" />
              <path d="M533.500 644V244M533.500 207.500H598A111 111 0 0 0 672 178.800A349 349 0 0 1 1137 178.800A111 111 0 0 0 1211 207.500H1276.500V644" stroke="#22e6e6" />
              <path d="M533.500 208V244" stroke="#b0524c" />
              <path d="M558.500 644V232.500H598A136 136 0 0 0 688.600 197.400A324 324 0 0 1 1120.400 197.400A136 136 0 0 0 1211 232.500H1251.500V644" stroke="#e01be0" />
              <path d="M534 244.500h24M555 232.500h7M558.500 229v7" stroke="#eee" />
              <path d="M540 244.500l6-3M540 244.500l6 3M551 244.500l-6-3M551 244.500l-6 3" stroke="#eee" />
            </g>
            <text x="540" y="249" class="dimtext">8.5</text>
            <path d="M553.500 247.500v16l4-3.500 3 6 2.500-1-3-6h5z" fill="#fff" stroke="#222" />
            <rect x="29" y="104" width="14" height="14" fill="#5d5d5d" /><text x="32" y="117" class="ax">Y</text>
            <rect x="1322" y="629" width="14" height="14" fill="#555" /><text x="1324" y="642" class="ax">X</text>
          </g>
        </svg>
      </svg>

      <aside class="side right">
        <div class="vstrip">
          <i class="hgrip"></i>
          <button v-for="(ic, k) in rightTools" :key="k" class="tb" :aria-label="ic.name"><svg viewBox="0 0 16 16" v-html="art[ic.name]"></svg></button>
        </div>
        <button class="vover" aria-label="更多"><svg viewBox="0 0 10 10"><path d="M2 2h1v6H2zM5 1l4 4-4 4z" /></svg></button>
      </aside>
    </main>

    <div class="lower">
      <div v-for="(set, si) in [bottomLeft, bottomMid]" :key="si" class="bar">
        <div v-for="(g, gi) in set" :key="gi" class="group">
          <div class="strip">
            <i class="grip"></i>
            <button v-for="(ic, k) in g.icons" :key="k" class="tb" :aria-label="ic.name"><svg viewBox="0 0 16 16" v-html="art[ic.name]"></svg></button>
          </div>
          <button class="over" aria-label="更多"><svg viewBox="0 0 11 25"><path d="M3 16h5v1.500H3zM3 19h5l-2.500 3z" /></svg></button>
        </div>
      </div>
    </div>

    <form class="command" @submit.prevent>
      <span class="prompt">尺寸标註位置</span>
      <label for="fx">X</label><input id="fx" ref="xField" type="text" value="-2322.2538" />
      <label for="fy" class="ly">Y</label><input id="fy" type="text" value="1260.0659" />
      <button class="ok">OK</button>
      <span class="snaplabel">抓点</span>
      <div class="snaps"><button v-for="s in snaps" :key="s.n" type="button" :class="s.c" :aria-label="s.n"><svg viewBox="0 0 16 16" v-html="art[s.n]"></svg></button></div>
    </form>

    <footer class="status"><span class="sx">X -2324.2</span><span class="sy">Y 1256.41</span><span class="sgap"></span><span class="dim">SNAP</span><span class="dim last">ORTHO</span></footer>

    <div class="taskbar">
      <button class="start" aria-label="开始"><svg viewBox="0 0 38 38"><defs><radialGradient id="orb" cx=".5" cy=".85" r=".8"><stop offset="0" stop-color="#35c5e8" /><stop offset=".6" stop-color="#155078" /><stop offset="1" stop-color="#5c9ab8" /></radialGradient></defs><circle cx="19" cy="19" r="17.500" fill="url(#orb)" stroke="#16425f" /><path d="M4 15a16 16 0 0 1 30 0c-8 5-20 4-30 0z" fill="#b9dcea" opacity=".5" /><path d="M10 11c4-3 6-2 8-1l-2 8c-3-2-6-1-8 1z" fill="#ef6a2f" /><path d="M20 11c3 2 6 1 9-1l-2 9c-3 2-6 1-9 0z" fill="#95c63c" /><path d="M8 21c3-2 5-2 8 0l-2 7c-2-2-5-1-7 1z" fill="#4b9fe0" /><path d="M18 21c3 1 6 1 9 0l-2 7c-3 2-6 2-9 0z" fill="#fbcb35" /></svg></button>
      <button v-for="a in appNames" :key="a" class="app-btn" :class="{ current: a === 'alpha' }" :aria-label="a"><svg viewBox="0 0 32 32" v-html="apps[a]"></svg></button>
      <div class="tray"><svg v-for="(t, i) in tray" :key="i" viewBox="0 0 16 16" v-html="t"></svg></div>
      <div class="clock"><span>16:16</span><span>2019/3/16 星期六</span></div>
      <button class="desk" aria-label="显示桌面"></button>
    </div>

    <div class="timer">03:16</div>

    <div class="sogou">
      <svg class="slogo" viewBox="0 0 28 28"><path d="M1 5l21-4 5 21-21 5z" fill="#ee5425" /><path d="M22 7C12 3 3 10 12 13s7 7-5 6" fill="none" stroke="#fff" stroke-width="4" /></svg>
      <div class="sbody">
        <span>中</span>
        <svg viewBox="0 0 16 16"><circle cx="4" cy="5" r="2" fill="none" stroke="#1970c2" stroke-width="1.500" /><path d="M11 8h3c1 3-1 5-4 6l1-3z" fill="#1970c2" /></svg>
        <svg viewBox="0 0 16 16"><circle cx="8" cy="8" r="7" fill="none" stroke="#1970c2" stroke-width="1.800" /><path d="M6 4v3M10 4v3M4 9c1 4 7 4 8 0" fill="none" stroke="#1970c2" stroke-width="1.500" /></svg>
        <svg viewBox="0 0 16 16"><rect x="5" y="0" width="6" height="10" rx="3" fill="#1970c2" /><path d="M2 7c0 7 12 7 12 0M8 12v3M5 15h6" fill="none" stroke="#1970c2" stroke-width="1.600" /></svg>
        <svg viewBox="0 0 16 16"><rect x="0" y="2" width="16" height="12" rx="1" fill="#1970c2" /><path d="M2 5h12M2 8h12" stroke="#fff" stroke-width="1.500" stroke-dasharray="2 1" /><path d="M4 11.500h8" stroke="#fff" stroke-width="1.500" /></svg>
        <svg viewBox="0 0 16 16"><circle cx="7" cy="4" r="3.500" fill="#b3bdcb" /><path d="M1 15V9h11v6z" fill="#b3bdcb" /><rect x="10" y="8" width="5" height="7" fill="#fff" stroke="#b3bdcb" /></svg>
        <svg viewBox="0 0 16 16"><path d="M4 1c3 2 5 2 8 0l4 4-3 3-1-1v8H4V7L3 8 0 5z" fill="#1970c2" /></svg>
        <svg viewBox="0 0 16 16"><path d="M1 1h6v6H1zM1 9h6v6H1zM9 9h6v6H9z" fill="#1970c2" /><path d="M10 2h4v4h-4z" fill="none" stroke="#1970c2" stroke-width="1.500" /></svg>
      </div>
    </div>

    <div class="meter">
      <div class="rates"><p><b class="up">↑</b><span>0<small>K/s</small></span></p><p><b class="down">↓</b><span>0<small>K/s</small></span></p></div>
      <div class="dial"><svg viewBox="0 0 60 60"><defs><linearGradient id="ring" x1="0" y1="0" x2="0" y2="1"><stop offset="0" stop-color="#39bcd0" /><stop offset=".6" stop-color="#86c982" /><stop offset="1" stop-color="#e8d34e" /></linearGradient></defs><path d="M30 5A25 25 0 1 1 9 43" fill="none" stroke="url(#ring)" stroke-width="1.800" /></svg><span>66<small>%</small></span></div>
    </div>

    <div class="ime">
      <svg viewBox="0 0 16 16"><g fill="#e35a3c"><ellipse cx="2.500" cy="7" rx="2" ry="2.500" /><ellipse cx="5.500" cy="3" rx="2" ry="2.500" /><ellipse cx="10.500" cy="3" rx="2" ry="2.500" /><ellipse cx="13.500" cy="7" rx="2" ry="2.500" /><path d="M8 7c3 1 6 4 5 7-2 2-8 2-10 0-1-3 2-6 5-7z" /></g></svg>
      <span>五</span>
      <svg viewBox="0 0 16 16"><path d="M10 1c6 4 4 13-3 13-3 0-5-1-6-3 6 2 10-3 9-10z" fill="#555" /></svg>
      <svg viewBox="0 0 16 16"><circle cx="4" cy="5" r="2" fill="none" stroke="#555" stroke-width="1.500" /><path d="M11 8h3c1 3-1 5-4 6l1-3z" fill="#555" /></svg>
      <svg viewBox="0 0 16 16"><circle cx="8" cy="8" r="5.500" fill="none" stroke="#555" stroke-width="2.500" /><circle cx="8" cy="8" r="7" fill="none" stroke="#555" stroke-width="2" stroke-dasharray="2.700 2.800" /></svg>
    </div>
  </div>
</template>

<style>
html, body { background: #eef1fb; overflow: hidden; }
</style>

<style scoped>
* { box-sizing: border-box; }
button { border: 0; padding: 0; margin: 0; background: none; font: inherit; color: inherit; }
.app { position: relative; display: flex; flex-direction: column; min-height: 100vh; background: #eef1fb; font: 12px "Noto Sans", "Noto Sans CJK SC", sans-serif; color: #111; overflow: hidden; }
.title { position: relative; display: flex; align-items: center; height: 21px; flex: none; padding-left: 1px; background: linear-gradient(90deg, #8fa6be 0, #7397bd 120px, #205a98 210px, #164a87 420px, #1c5290 600px, #2a6098 760px, #174578 850px, #204f82 1000px, #1b4378 1200px, #506f90 100%); border-bottom: 1px solid #d5e3f2; overflow: hidden; }
.logo { width: 16px; height: 16px; z-index: 1; }
h1 { font-size: 12px; line-height: 20px; font-weight: 400; margin: 0 0 0 4px; padding-top: 1px; z-index: 1; text-shadow: 0 0 6px #fff, 0 0 10px #e6f0fa; }
.blob { position: absolute; border-radius: 4px; filter: blur(3px); }
.green { left: 176px; top: 5px; width: 24px; height: 18px; background: #42b36b; }
.gold { left: 238px; top: 6px; width: 50px; height: 20px; background: #abb35c; }
.pale { left: 322px; top: 12px; width: 28px; height: 12px; background: #a8c2dd; }
.winbtns { margin-left: auto; margin-right: 3px; height: 18px; align-self: flex-start; display: flex; border: 1px solid #d6e0ea; border-top: 0; border-radius: 0 0 5px 5px; overflow: hidden; }
.winbtns button { width: 28px; height: 17px; background: linear-gradient(#9fb3c8, #5c7897 50%, #3f6084 50%, #7592af); border-right: 1px solid #c4d2df; display: grid; place-items: center; }
.winbtns .close { width: 46px; border: 0; background: linear-gradient(#dd9688, #c54a3c 50%, #ab2314 50%, #d26a4c); }
.winbtns svg { width: 12px; height: 10px; }
.menu { height: 28px; flex: none; display: flex; align-items: center; padding: 2px 0 0 3px; background: linear-gradient(90deg, #e6ebfa, #f1f5fc); }
.menu button { padding: 0 8px; line-height: 20px; white-space: nowrap; }
.grip { width: 7px; height: 15px; flex: none; background: linear-gradient(#a4abbd, #a4abbd) 3px 0 / 2px 100% no-repeat; mask: repeating-linear-gradient(#000 0 2px, transparent 2px 4px); }
.bar { display: flex; gap: 3px; height: 25px; flex: none; padding-left: 3px; margin-top: 1px; }
.group { display: flex; flex: none; }
.group.grow { flex: 1; min-width: 0; }
.grow .strip { flex: 1; min-width: 0; overflow: hidden; }
.strip { display: flex; align-items: center; padding-right: 2px; background: linear-gradient(#fbfcfe, #eceff7 50%, #cdd3e2); border-radius: 3px 0 0 3px; }
.strip.wide { padding-right: 4px; }
.tb { width: 22px; height: 22px; flex: none; display: grid; place-items: center; }
.tb svg { width: 16px; height: 16px; overflow: visible; }
.tb.on { background: linear-gradient(#e4f3fb, #a9d7ef); border: 1px solid #3f96c4; }
.vsep { width: 8px; height: 14px; background: linear-gradient(#a3a9b6, #a3a9b6) 3px 0 / 1px 100% no-repeat; }
.over { width: 11px; height: 25px; background: linear-gradient(#c3cad9, #d3d8e5 60%, #e9ecf4); }
.over svg { display: block; width: 11px; height: 25px; }
.main { display: flex; flex: 1; min-height: 300px; border-top: 1px solid #777; margin-top: 1px; }
.side { width: 27px; flex: none; background: #e9edfa; border-right: 1px solid #666; }
.side.right { width: 28px; border: 0; background: #f4f6fc; padding-left: 2px; }
.vstrip { width: 26px; margin-top: 2px; display: flex; flex-direction: column; align-items: center; padding: 1px 0 2px; background: linear-gradient(90deg, #fafbfe, #eceff7 50%, #cfd5e4); border-radius: 3px 3px 0 0; }
.hgrip { width: 14px; height: 6px; background: linear-gradient(#a4abbd, #a4abbd) 0 2px / 100% 2px no-repeat; mask: repeating-linear-gradient(90deg, #000 0 2px, transparent 2px 4px); }
.hsep { width: 14px; height: 6px; background: linear-gradient(#9aa0ad, #9aa0ad) 0 3px / 100% 1px no-repeat; }
.vover { display: flex; justify-content: flex-end; align-items: center; width: 25px; height: 10px; background: #ccd2e0; }
.vover svg { width: 10px; height: 9px; margin-right: 3px; }
.canvas { flex: 1; min-width: 0; width: 0; height: auto; display: block; overflow: visible; }
.scale text { font: 400 14px "DejaVu Sans", sans-serif; fill: #e6e6e6; }
.notice text { font: 300 38px "Noto Sans CJK SC", sans-serif; fill: #fb0202; }
.notice .code { font: 700 37px "Liberation Serif", serif; }
.dimtext { font: 200 14px "DejaVu Sans", sans-serif; fill: #eee; }
.ax { font: 200 13px "DejaVu Sans", sans-serif; fill: #f4f4f4; }
.lower { position: relative; display: grid; grid-template-columns: 479px 1fr; height: 30px; flex: none; padding-top: 2px; background: linear-gradient(90deg, #e9edfb, #f3f6fc); }
.command { display: flex; align-items: center; height: 33px; flex: none; padding: 0 0 2px 371px; background: #f0f0f0; border-bottom: 1px solid #8d8d8d; }
.prompt { width: 87px; white-space: nowrap; }
.command label { width: 13px; font-size: 11px; }
.command .ly { margin-left: 9px; }
.command input { width: 67px; height: 22px; padding: 0 4px; border: 1px solid #dcdfe4; background: #fff; font: 11px "DejaVu Sans Condensed", "Open Sans", sans-serif; color: #111; outline: 0; }
#fx { border-color: #9dbfe3; }
#fx::selection { background: #3398f5; color: #fff; }
.ok { width: 38px; height: 26px; margin-left: 7px; border: 1px solid #6f97c8; border-radius: 2px; background: linear-gradient(#e3eefb, #cfdff3 50%, #b6cdea 50%, #d3e5fa); font-size: 11px; }
.snaplabel { width: 31px; margin-left: 45px; }
.snaps { display: flex; gap: 4px; }
.snaps button { width: 24px; height: 26px; border: 1px solid #6d98ce; border-radius: 2px; background: linear-gradient(#e7f1fd, #d5e5f8 50%, #bfd6f2 50%, #d7e8fb); display: grid; place-items: center; }
.snaps .hot { border-color: #e7c979; }
.snaps .off { border-color: #c7c7c7; background: linear-gradient(#efefef, #e2e2e2 50%, #cfcfcf 50%, #dedede); filter: grayscale(1); }
.snaps svg { width: 16px; height: 16px; }
.status { height: 20px; flex: none; display: flex; justify-content: flex-end; align-items: center; border-top: 1px solid #9b9b9b; background: #f1eeee; padding-right: 104px; line-height: 18px; }
.status span { padding: 0 4px 0 10px; border-right: 1px solid #d8d5d5; white-space: nowrap; height: 18px; }
.status .sx, .status .sy { width: 70px; padding-left: 10px; padding-right: 0; }
.status .sx { width: 69px; }
.status .sgap { width: 14px; padding: 0; }
.status .dim { width: 50px; padding-right: 0; color: #777; }
.status .last { border: 0; }
.taskbar { height: 40px; flex: none; display: flex; align-items: center; border-top: 1px solid #14324e; background: linear-gradient(60deg, transparent 0 68%, #7db7e033 69%, transparent 71%), linear-gradient(90deg, #2e80b6 0, #4fb4dc 110px, #4ba9d6 300px, #3b98cf 500px, #3a90cb 720px, #2a78bc 840px, #2371b6 900px, #1d5794 970px, #12427b 1100px, #184c82 1366px); box-shadow: inset 0 1px #8fc5e5; }
.start { width: 58px; height: 39px; padding-right: 4px; display: grid; place-items: center; }
.start svg { width: 38px; height: 38px; }
.app-btn { width: 58px; height: 38px; margin-left: 2px; margin-right: 2px; flex: none; display: grid; place-items: center; }
.app-btn svg { width: 32px; height: 32px; overflow: visible; }
.app-btn.current { border: 1px solid #dcecf8; border-radius: 2px; background: linear-gradient(110deg, #c5dcee, #8fb8da 50%, #7baacf 51%, #93bcdd); }
.tray { margin-left: auto; display: flex; gap: 8px; }
.tray svg { width: 16px; height: 16px; overflow: visible; }
.tray svg:first-child { margin-right: 6px; }
.clock { width: 110px; margin-left: 12px; margin-right: 4px; display: flex; flex-direction: column; text-align: center; color: #fff; line-height: 18px; white-space: nowrap; }
.desk { width: 13px; height: 39px; border: 1px solid #8bacc6; background: linear-gradient(90deg, #4b7397, #1b4268); }
.timer { position: absolute; left: 1172px; top: 151px; width: 50px; height: 50px; border: 3px solid #eceff4; border-radius: 50%; background: linear-gradient(150deg, #3e7fe0, #46a4f0 70%, #8ed9f4); color: #e4f4ff; font: 14px/44px "Open Sans", sans-serif; text-align: center; }
.sogou { position: absolute; right: 0; top: 462px; width: 206px; height: 28px; display: flex; align-items: center; }
.slogo { position: relative; z-index: 1; width: 28px; height: 28px; }
.sbody { flex: 1; margin-left: -12px; margin-top: 4px; height: 22px; padding: 0 4px 0 18px; background: #fff; display: flex; justify-content: space-between; align-items: center; color: #1970c2; font: 700 15px/20px "Noto Sans CJK SC", sans-serif; }
.sbody svg { width: 16px; height: 16px; }
.meter { position: absolute; right: 36px; top: 595px; width: 120px; height: 60px; }
.rates { position: absolute; left: 30px; top: 9px; width: 90px; height: 42px; border-radius: 0 21px 21px 0; background: #20232ce6; color: #eee; }
.rates p { margin: 0; height: 21px; display: flex; justify-content: space-between; align-items: center; padding: 0 8px 0 30px; }
.rates small { font-size: 10px; color: #aaa; }
.up { color: #35b4f0; }
.down { color: #2cc24b; }
.dial { position: absolute; left: 0; top: 0; width: 60px; height: 60px; border-radius: 50%; background: linear-gradient(#363a48, #2d3242); border: 1px solid #252936; color: #eee; font: 300 24px/58px "Open Sans", sans-serif; text-align: center; }
.dial svg { position: absolute; left: 0; top: 0; width: 58px; height: 58px; }
.dial small { font-size: 10px; }
.ime { position: absolute; right: 0; top: 700px; width: 132px; height: 28px; display: flex; align-items: center; justify-content: space-between; padding: 0 6px; background: #fbfbfb; border: 1px solid #cfcfcf; color: #444; font: 500 16px/24px "Noto Sans CJK SC", sans-serif; }
.ime svg { width: 16px; height: 16px; }
</style>
